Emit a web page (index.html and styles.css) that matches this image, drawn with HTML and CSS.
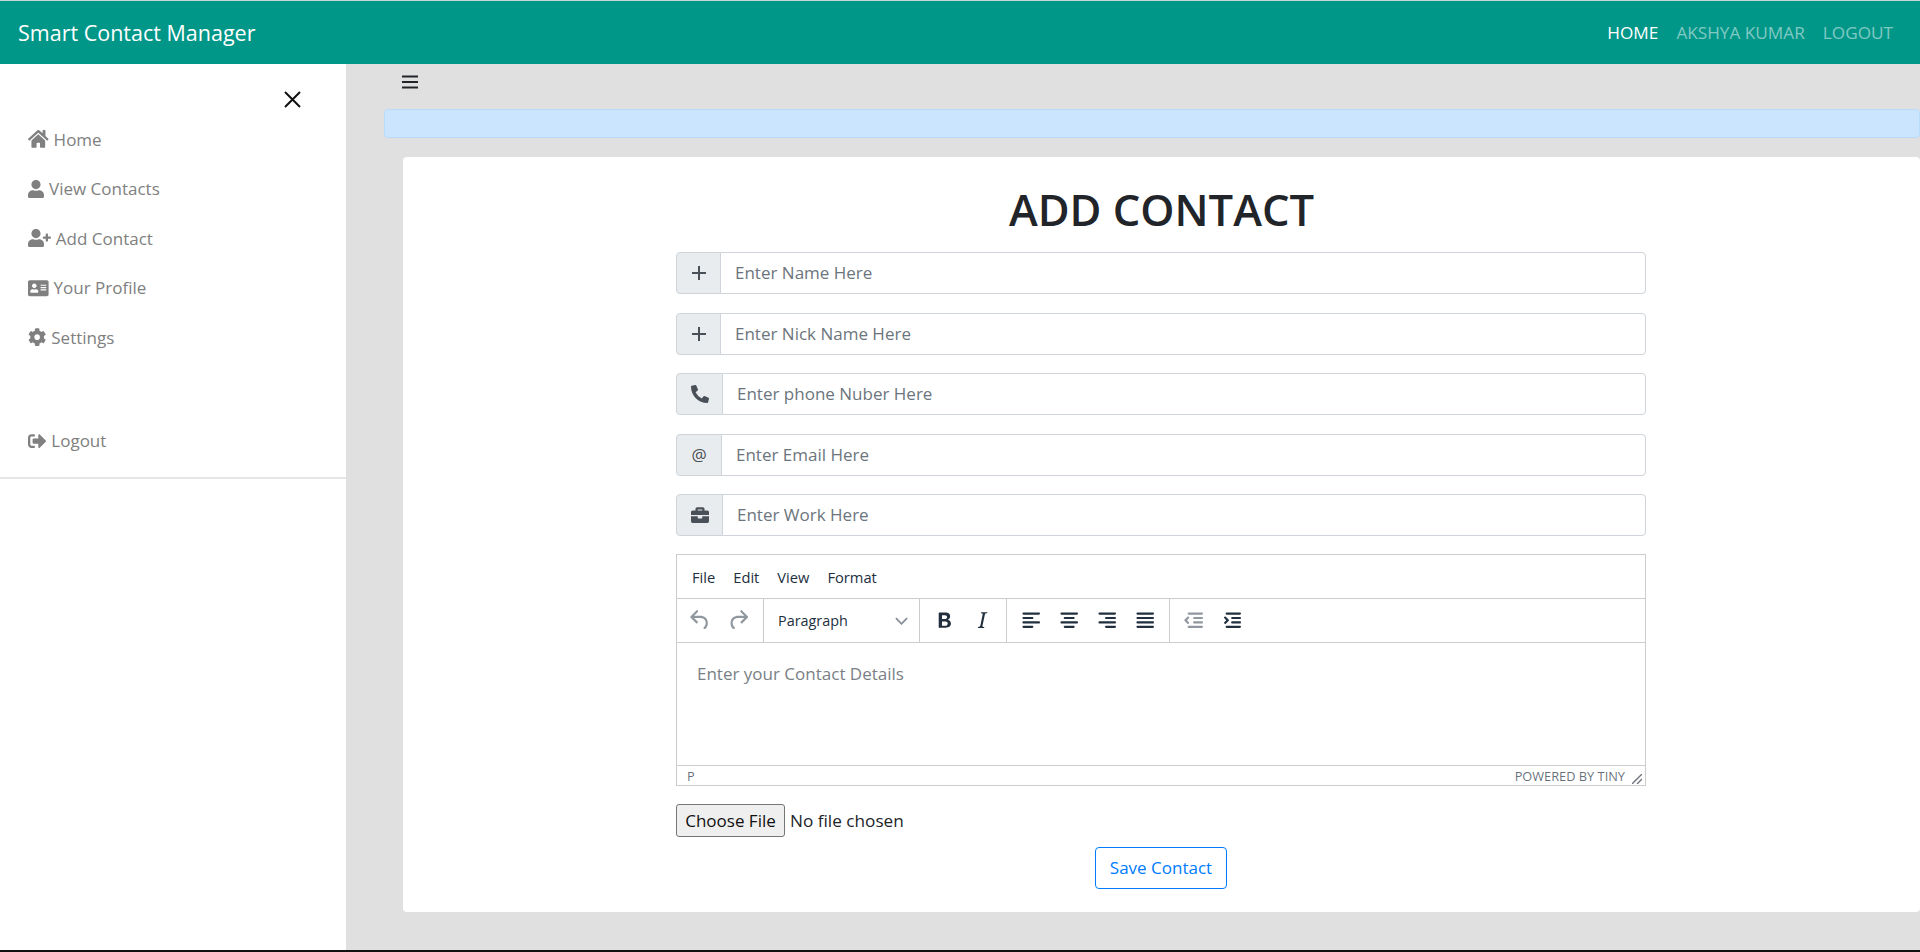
FILE: index.html
```html
<!DOCTYPE html>
<html lang="en">
<head>
<meta charset="utf-8">
<title>Add Contact</title>
<link rel="stylesheet" href="styles.css">
</head>
<body>
<div class="app">
  <nav class="navbar">
    <a class="brand">Smart Contact Manager</a>
    <ul class="nav-links">
      <li class="active">HOME</li>
      <li>AKSHYA KUMAR</li>
      <li>LOGOUT</li>
    </ul>
  </nav>
  <div class="body-row">
    <aside class="sidebar">
      <div class="close-row">
        <svg class="close-icon" viewBox="0 0 17 17"><path d="M1 1l15 15M16 1L1 16" fill="none" stroke="#111" stroke-width="2"/></svg>
      </div>
      <a class="side-link"><svg class="ic ic-home" viewBox="0 32 576 448" preserveAspectRatio="none"><path d="M280.37 148.26L96 300.11V464a16 16 0 0 0 16 16l112.06-.29a16 16 0 0 0 15.92-16V368a16 16 0 0 1 16-16h64a16 16 0 0 1 16 16v95.64a16 16 0 0 0 16 16.05L464 480a16 16 0 0 0 16-16V300L295.67 148.26a12.19 12.19 0 0 0-15.3 0zM571.6 251.47L488 182.56V44.05a12 12 0 0 0-12-12h-56a12 12 0 0 0-12 12v72.61L318.47 43a48 48 0 0 0-61 0L4.34 251.47a12 12 0 0 0-1.6 16.9l25.5 31A12 12 0 0 0 45.15 301l235.22-193.74a12.19 12.19 0 0 1 15.3 0L530.9 301a12 12 0 0 0 16.9-1.6l25.5-31a12 12 0 0 0-1.7-16.93z"/></svg> Home</a>
      <a class="side-link"><svg class="ic" viewBox="0 0 448 512"><path d="M224 256c70.7 0 128-57.3 128-128S294.7 0 224 0 96 57.3 96 128s57.3 128 128 128zm89.6 32h-16.7c-22.2 10.2-46.9 16-72.9 16s-50.6-5.8-72.9-16h-16.7C60.2 288 0 348.2 0 422.4V464c0 26.5 21.5 48 48 48h352c26.5 0 48-21.5 48-48v-41.6c0-74.2-60.2-134.4-134.4-134.4z"/></svg> View Contacts</a>
      <a class="side-link"><svg class="ic" viewBox="0 0 640 512"><path d="M624 208h-64v-64c0-8.8-7.2-16-16-16h-32c-8.8 0-16 7.2-16 16v64h-64c-8.8 0-16 7.2-16 16v32c0 8.8 7.2 16 16 16h64v64c0 8.8 7.2 16 16 16h32c8.8 0 16-7.2 16-16v-64h64c8.8 0 16-7.2 16-16v-32c0-8.8-7.2-16-16-16zm-400 48c70.7 0 128-57.3 128-128S294.7 0 224 0 96 57.3 96 128s57.3 128 128 128zm89.6 32h-16.7c-22.2 10.2-46.9 16-72.9 16s-50.6-5.8-72.9-16h-16.7C60.2 288 0 348.2 0 422.4V464c0 26.5 21.5 48 48 48h352c26.5 0 48-21.5 48-48v-41.6c0-74.2-60.2-134.4-134.4-134.4z"/></svg> Add Contact</a>
      <a class="side-link"><svg class="ic" viewBox="0 0 576 512"><path d="M528 32H48C21.5 32 0 53.5 0 80v352c0 26.5 21.5 48 48 48h480c26.5 0 48-21.5 48-48V80c0-26.5-21.5-48-48-48zm-352 96c35.3 0 64 28.7 64 64s-28.7 64-64 64-64-28.7-64-64 28.7-64 64-64zm112 236.8c0 10.6-10 19.2-22.4 19.2H86.4C74 384 64 375.4 64 364.8v-19.2c0-31.8 30.1-57.6 67.2-57.6h5c12.3 5.1 25.7 8 39.8 8s27.6-2.9 39.8-8h5c37.1 0 67.2 25.8 67.2 57.6v19.2zM512 312c0 4.4-3.6 8-8 8H360c-4.4 0-8-3.6-8-8v-16c0-4.4 3.6-8 8-8h144c4.4 0 8 3.6 8 8v16zm0-64c0 4.4-3.6 8-8 8H360c-4.4 0-8-3.6-8-8v-16c0-4.4 3.6-8 8-8h144c4.4 0 8 3.6 8 8v16zm0-64c0 4.4-3.6 8-8 8H360c-4.4 0-8-3.6-8-8v-16c0-4.4 3.6-8 8-8h144c4.4 0 8 3.6 8 8v16z"/></svg> Your Profile</a>
      <a class="side-link"><svg class="ic" viewBox="0 0 512 512"><path d="M487.4 315.7l-42.6-24.6c4.3-23.2 4.3-47 0-70.2l42.6-24.6c4.9-2.8 7.1-8.6 5.5-14-11.1-35.6-30-67.8-54.7-94.6-3.8-4.1-10-5.1-14.8-2.3L380.8 110c-17.9-15.4-38.5-27.3-60.8-35.1V25.8c0-5.6-3.9-10.5-9.4-11.7-36.7-8.2-74.3-7.8-109.2 0-5.5 1.2-9.4 6.1-9.4 11.7V75c-22.2 7.9-42.8 19.8-60.8 35.1L88.7 85.5c-4.9-2.8-11-1.9-14.8 2.3-24.7 26.7-43.6 58.9-54.7 94.6-1.7 5.4.6 11.2 5.5 14L67.3 221c-4.3 23.2-4.3 47 0 70.2l-42.6 24.6c-4.9 2.8-7.1 8.6-5.5 14 11.1 35.6 30 67.8 54.7 94.6 3.8 4.1 10 5.1 14.8 2.3l42.6-24.6c17.9 15.4 38.5 27.3 60.8 35.1v49.2c0 5.6 3.9 10.5 9.4 11.7 36.7 8.2 74.3 7.8 109.2 0 5.5-1.2 9.4-6.1 9.4-11.7v-49.2c22.2-7.9 42.8-19.8 60.8-35.1l42.6 24.6c4.9 2.8 11 1.9 14.8-2.3 24.7-26.7 43.6-58.9 54.7-94.6 1.5-5.5-.7-11.3-5.6-14.1zM256 336c-44.1 0-80-35.9-80-80s35.9-80 80-80 80 35.9 80 80-35.9 80-80 80z"/></svg> Settings</a>
      <a class="side-link logout"><svg class="ic" viewBox="0 0 512 512"><path d="M497 273L329 441c-15 15-41 4.5-41-17v-96H152c-13.3 0-24-10.7-24-24v-96c0-13.3 10.7-24 24-24h136V88c0-21.4 25.9-32 41-17l168 168c9.3 9.4 9.3 24.6 0 34zM192 436v-40c0-6.6-5.4-12-12-12H96c-17.7 0-32-14.3-32-32V160c0-17.7 14.3-32 32-32h84c6.6 0 12-5.4 12-12V76c0-6.6-5.4-12-12-12H96c-53 0-96 43-96 96v192c0 53 43 96 96 96h84c6.6 0 12-5.4 12-12z"/></svg> Logout</a>
      <div class="side-rule"></div>
    </aside>
    <main class="content">
      <svg class="burger" viewBox="0 0 16 14"><path d="M0 1.5h16M0 7h16M0 12.500h16" stroke="#212529" stroke-width="2" fill="none"/></svg>
      <div class="alert"></div>
      <section class="card">
        <h1 class="title">ADD CONTACT</h1>
        <form class="form">
          <div class="group">
            <span class="addon w44"><svg class="plus" viewBox="0 0 16 16"><path d="M8 1v14M1 8h14" stroke="#495057" stroke-width="2" fill="none"/></svg></span>
            <input class="field" placeholder="Enter Name Here">
          </div>
          <div class="group">
            <span class="addon w44"><svg class="plus" viewBox="0 0 16 16"><path d="M8 1v14M1 8h14" stroke="#495057" stroke-width="2" fill="none"/></svg></span>
            <input class="field" placeholder="Enter Nick Name Here">
          </div>
          <div class="group">
            <span class="addon w46"><svg class="fa" viewBox="0 0 512 512"><path d="M497.39 361.8l-112-48a24 24 0 0 0-28 6.9l-49.6 60.6A370.66 370.66 0 0 1 130.6 204.11l60.6-49.6a23.94 23.94 0 0 0 6.9-28l-48-112A24.16 24.16 0 0 0 122.6.61l-104 24A24 24 0 0 0 0 48c0 256.5 207.9 464 464 464a24 24 0 0 0 23.4-18.6l24-104a24.29 24.29 0 0 0-14.01-27.6z"/></svg></span>
            <input class="field" placeholder="Enter phone Nuber Here">
          </div>
          <div class="group">
            <span class="addon w45">@</span>
            <input class="field" placeholder="Enter Email Here">
          </div>
          <div class="group">
            <span class="addon w46"><svg class="fa" viewBox="0 0 512 512"><path d="M320 336c0 8.840-7.160 16-16 16h-96c-8.840 0-16-7.160-16-16v-48H0v144c0 25.600 22.400 48 48 48h416c25.600 0 48-22.400 48-48V288H320v48zm144-208h-80V80c0-25.600-22.400-48-48-48H176c-25.600 0-48 22.400-48 48v48H48c-25.600 0-48 22.400-48 48v80h512v-80c0-25.600-22.400-48-48-48zm-144 0H192V96h128v32z"/></svg></span>
            <input class="field" placeholder="Enter Work Here">
          </div>

          <div class="editor">
            <div class="menubar"><span>File</span><span>Edit</span><span>View</span><span>Format</span></div>
            <div class="toolbar">
              <div class="tgroup g1">
                <span class="tbtn muted"><svg viewBox="0 0 24 24"><path transform="matrix(-1 0 0 1 24 0)" d="M17.600 10H12c-2.800 0-4.400 1.400-4.900 3.500-.4 2 .3 4 1.400 4.600a1 1 0 1 1-1 1.800c-2-1.200-2.900-4.100-2.300-6.800.6-3 3-5.100 6.800-5.100h5.600l-3.300-3.300a1 1 0 1 1 1.400-1.400l5 5a1 1 0 0 1 0 1.400l-5 5a1 1 0 0 1-1.400-1.400l3.300-3.300z" /></svg></span>
                <span class="tbtn muted"><svg viewBox="0 0 24 24"><path d="M17.600 10H12c-2.800 0-4.400 1.400-4.900 3.500-.4 2 .3 4 1.400 4.600a1 1 0 1 1-1 1.800c-2-1.200-2.900-4.100-2.300-6.800.6-3 3-5.100 6.800-5.100h5.600l-3.300-3.300a1 1 0 1 1 1.400-1.400l5 5a1 1 0 0 1 0 1.400l-5 5a1 1 0 0 1-1.400-1.400l3.300-3.300z"/></svg></span>
              </div>
              <div class="tgroup g2">
                <span class="select">Paragraph<svg viewBox="0 0 14 8"><path d="M1 1l6 6 6-6" fill="none" stroke="#8a9098" stroke-width="2"/></svg></span>
              </div>
              <div class="tgroup g3">
                <span class="tbtn"><svg viewBox="0 0 24 24"><path fill-rule="evenodd" d="M7.800 19c-.3 0-.5 0-.6-.2l-.2-.5V5.700c0-.2 0-.4.200-.5l.6-.2h5c1.500 0 2.700.3 3.500 1 .7.600 1.100 1.400 1.100 2.500a3 3 0 0 1-.6 1.900c-.4.600-1 1-1.600 1.200.9.100 1.600.5 2.100 1.100.5.600.8 1.400.8 2.300 0 1.200-.4 2.100-1.200 2.800-.8.700-2 1-3.600 1H7.800zM10 11h2.600c.7 0 1.200-.2 1.500-.5.3-.3.5-.7.5-1.300 0-.5-.2-.9-.5-1.200-.3-.3-.8-.5-1.500-.5H10v3.500zm0 6h3c.7 0 1.300-.2 1.600-.5.4-.4.600-.8.600-1.400 0-.6-.2-1-.6-1.400-.3-.3-.9-.5-1.600-.5h-3V17z"/></svg></span>
                <span class="tbtn"><svg viewBox="0 0 24 24"><path d="M16.700 4.700l-.1.900h-.3c-.6 0-1 0-1.400.3-.3.3-.4.600-.5 1.100l-2.100 9.800v.6c0 .5.400.8 1.400.8h.2l-.2.800H8l.2-.8h.2c1.100 0 1.800-.5 2-1.500l2-9.800.1-.5c0-.6-.4-.8-1.400-.8h-.3l.2-.9h5.800z"/></svg></span>
              </div>
              <div class="tgroup g4">
                <span class="tbtn"><svg viewBox="0 0 24 24"><path d="M5 5h14c.6 0 1 .4 1 1s-.4 1-1 1H5a1 1 0 1 1 0-2zm0 4h8c.6 0 1 .4 1 1s-.4 1-1 1H5a1 1 0 1 1 0-2zm0 8h8c.6 0 1 .4 1 1s-.4 1-1 1H5a1 1 0 0 1 0-2zm0-4h14c.6 0 1 .4 1 1s-.4 1-1 1H5a1 1 0 0 1 0-2z"/></svg></span>
                <span class="tbtn"><svg viewBox="0 0 24 24"><path d="M5 5h14c.6 0 1 .4 1 1s-.4 1-1 1H5a1 1 0 1 1 0-2zm3 4h8c.6 0 1 .4 1 1s-.4 1-1 1H8a1 1 0 1 1 0-2zm0 8h8c.6 0 1 .4 1 1s-.4 1-1 1H8a1 1 0 0 1 0-2zm-3-4h14c.6 0 1 .4 1 1s-.4 1-1 1H5a1 1 0 0 1 0-2z"/></svg></span>
                <span class="tbtn"><svg viewBox="0 0 24 24"><path d="M5 5h14c.6 0 1 .4 1 1s-.4 1-1 1H5a1 1 0 1 1 0-2zm6 4h8c.6 0 1 .4 1 1s-.4 1-1 1h-8a1 1 0 0 1 0-2zm0 8h8c.6 0 1 .4 1 1s-.4 1-1 1h-8a1 1 0 0 1 0-2zm-6-4h14c.6 0 1 .4 1 1s-.4 1-1 1H5a1 1 0 0 1 0-2z"/></svg></span>
                <span class="tbtn"><svg viewBox="0 0 24 24"><path d="M5 5h14c.6 0 1 .4 1 1s-.4 1-1 1H5a1 1 0 1 1 0-2zm0 4h14c.6 0 1 .4 1 1s-.4 1-1 1H5a1 1 0 1 1 0-2zm0 4h14c.6 0 1 .4 1 1s-.4 1-1 1H5a1 1 0 0 1 0-2zm0 4h14c.6 0 1 .4 1 1s-.4 1-1 1H5a1 1 0 0 1 0-2z"/></svg></span>
              </div>
              <div class="tgroup g5">
                <span class="tbtn muted"><svg viewBox="0 0 24 24"><path d="M7 5h12c.6 0 1 .4 1 1s-.4 1-1 1H7a1 1 0 1 1 0-2zm5 4h7c.6 0 1 .4 1 1s-.4 1-1 1h-7a1 1 0 0 1 0-2zm0 4h7c.6 0 1 .4 1 1s-.4 1-1 1h-7a1 1 0 0 1 0-2zm-5 4h12c.6 0 1 .4 1 1s-.4 1-1 1H7a1 1 0 0 1 0-2zM5.400 12l1.800 1.800a1 1 0 0 1-1.400 1.400l-2.500-2.500a1 1 0 0 1 0-1.400l2.500-2.500a1 1 0 0 1 1.400 1.400L5.400 12z"/></svg></span>
                <span class="tbtn"><svg viewBox="0 0 24 24"><path d="M7 5h12c.6 0 1 .4 1 1s-.4 1-1 1H7a1 1 0 1 1 0-2zm5 4h7c.6 0 1 .4 1 1s-.4 1-1 1h-7a1 1 0 0 1 0-2zm0 4h7c.6 0 1 .4 1 1s-.4 1-1 1h-7a1 1 0 0 1 0-2zm-5 4h12c.6 0 1 .4 1 1s-.4 1-1 1H7a1 1 0 0 1 0-2zM6.600 12L4.800 10.200a1 1 0 0 1 1.400-1.400l2.500 2.500a1 1 0 0 1 0 1.400l-2.500 2.500a1 1 0 0 1-1.400-1.400L6.600 12z"/></svg></span>
              </div>
            </div>
            <div class="edit-area">Enter your Contact Details</div>
            <div class="statusbar">
              <span class="path">P</span>
              <span class="brandbar">POWERED BY TINY</span>
              <svg class="grip" viewBox="0 0 10 10"><path d="M0 10L10 0M5 10l5-5" stroke="#6d737b" stroke-width="1.400" fill="none"/></svg>
            </div>
          </div>

          <div class="file-row">
            <input class="file" type="file">
          </div>
          <div class="save-row">
            <button class="save" type="button">Save Contact</button>
          </div>
        </form>
      </section>
    </main>
  </div>
</div>
</body>
</html>
```

FILE: styles.css
```css
* { box-sizing: border-box; }
html, body { margin: 0; padding: 0; height: 100%; overflow: hidden; }
body { font-family: "Open Sans", "Noto Sans", sans-serif; color: #212529; background: #e0e0e0; }
.app { height: 952px; display: flex; flex-direction: column; border-bottom: 2px solid #111; }

.navbar { height: 64px; flex: none; background: #009688; border-top: 1px solid #c9d6d3; display: flex; align-items: center; justify-content: space-between; padding: 0 27px 0 18px; }
.brand { color: #fff; font-size: 21.500px; }
.nav-links { list-style: none; display: flex; gap: 18px; margin: 0; padding: 0; font-size: 17.200px; color: rgba(255,255,255,.5); }
.nav-links .active { color: #fff; }

.body-row { flex: 1; display: flex; min-height: 0; }
.sidebar { width: 346px; flex: none; background: #fff; }
.close-row { height: 50.500px; padding: 27px 0 0 284px; }
.close-icon { display: block; width: 17px; height: 17px; }
.side-link { display: flex; align-items: center; gap: 5px; height: 49.500px; padding-left: 28px; color: #808080; font-size: 17px; }
.ic { height: 18.300px; width: auto; fill: #808080; flex: none; }
.ic-home { width: 20.600px; height: 17.700px; }
.logout { margin-top: 54px; }
.side-rule { height: 2px; background: #e6e6e6; margin-top: 11px; }

.content { flex: 1; min-width: 0; padding: 11px 0 0 38px; }
.burger { display: block; width: 16px; height: 14px; margin-left: 18px; }
.alert { height: 29px; margin-top: 20px; background: #cce5ff; border: 1px solid #b8daff; border-radius: 4px; }
.card { margin: 19px 0 0 19px; height: 755px; background: #fff; border-radius: 4px; padding-top: 27px; }
.title { margin: 0; text-align: center; font-size: 43.500px; line-height: 52px; font-weight: 600; color: #212529; }

.form { width: 970px; margin: 16px 0 0 273px; }
.group { display: flex; height: 42px; margin-bottom: 18.500px; }
.addon { display: flex; align-items: center; justify-content: center; flex: none; background: #e9ecef; border: 1px solid #ced4da; border-radius: 4px 0 0 4px; color: #495057; font-size: 17px; }
.w44 { width: 45px; }
.w45 { width: 46px; }
.w46 { width: 47px; }
.plus { width: 16px; height: 16px; }
.fa { width: 18px; height: 18px; fill: #495057; }
.field { flex: 1; min-width: 0; margin-left: -1px; padding: 0 14px 1px; border: 1px solid #ced4da; border-radius: 0 4px 4px 0; font: 17px "Open Sans", sans-serif; color: #495057; background: #fff; outline: none; }
.field::placeholder { color: #6c757d; opacity: 1; }

.editor { margin-top: -0.500px; height: 232px; border: 1px solid #ccc; display: flex; flex-direction: column; background: #fff; }
.menubar { height: 44px; flex: none; display: flex; align-items: center; gap: 18px; padding-left: 15px; border-bottom: 1px solid #ccc; font-size: 14.700px; color: #222f3e; }
.toolbar { height: 44px; flex: none; display: flex; align-items: stretch; border-bottom: 1px solid #ccc; }
.tgroup { display: flex; align-items: center; border-right: 1px solid #ccc; }
.g1 { width: 87px; padding-left: 4px; }
.g2 { width: 156px; }
.g3 { width: 87px; padding-left: 5px; }
.g4 { width: 163px; padding-left: 5px; }
.g5 { padding-left: 5px; border-right: 0; }
.tbtn { width: 38px; display: flex; justify-content: center; flex: none; }
.tbtn svg { width: 26.400px; height: 26.400px; fill: #222f3e; flex: none; }
.tbtn.muted svg { fill: rgba(34,47,62,.5); }
.select { width: 100%; display: flex; align-items: center; justify-content: space-between; padding: 0 11px 0 14px; font-size: 14.400px; color: #222f3e; }
.select svg { width: 13px; height: 8px; }
.edit-area { flex: 1; padding: 19px 20px; font-size: 17px; color: #7a7f85; }
.statusbar { height: 20px; flex: none; display: flex; align-items: center; padding: 0 3px 0 10px; border-top: 1px solid #ccc; font-size: 12.800px; color: rgba(34,47,62,.7); }
.path { flex: 1; }
.brandbar { margin-right: 7px; }
.grip { width: 10px; height: 10px; margin-top: 6px; }

.file-row { margin-top: 18px; height: 35px; }
.file { font: 17.200px "Open Sans", sans-serif; color: #212529; width: 400px; height: 33px; }
.file::file-selector-button { width: 109px; height: 33px; margin-right: 5px; padding: 0; font: 17px "Open Sans", sans-serif; color: #111; background: #efefef; border: 1px solid #767676; border-radius: 3px; }
.save-row { margin-top: 8px; display: flex; justify-content: center; }
.save { width: 132px; height: 42px; padding: 0 0 2px; background: #fff; border: 1px solid #007bff; border-radius: 4px; color: #007bff; font: 17px "Open Sans", sans-serif; }
```
